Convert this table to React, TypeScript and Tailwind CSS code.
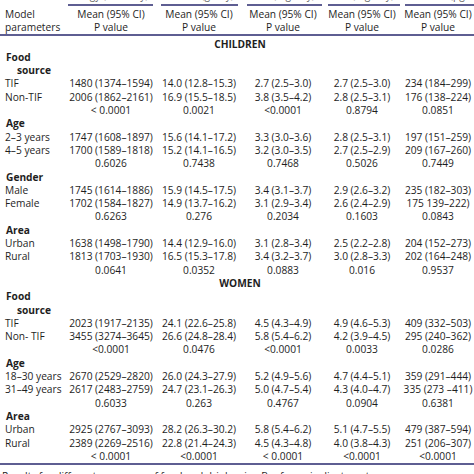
const cols = 'grid grid-cols-[68px_86px_90px_78px_80px_72px]'

type Row =
  | { kind: 'group'; label: string }
  | { kind: 'sub'; label: string }
  | { kind: 'data'; label: string; values: string[] }
  | { kind: 'p'; values: string[] }
  | { kind: 'section'; label: string }

const rows: Row[] = [
  { kind: 'section', label: 'CHILDREN' },
  { kind: 'group', label: 'Food' },
  { kind: 'sub', label: 'source' },
  { kind: 'data', label: 'TIF', values: ['1480 (1374–1594)', '14.0 (12.8–15.3)', '2.7 (2.5–3.0)', '2.7 (2.5–3.0)', '234 (184–299)'] },
  { kind: 'data', label: 'Non-TIF', values: ['2006 (1862–2161)', '16.9 (15.5–18.5)', '3.8 (3.5–4.2)', '2.8 (2.5–3.1)', '176 (138–224)'] },
  { kind: 'p', values: ['< 0.0001', '0.0021', '<0.0001', '0.8794', '0.0851'] },
  { kind: 'group', label: 'Age' },
  { kind: 'data', label: '2–3 years', values: ['1747 (1608–1897)', '15.6 (14.1–17.2)', '3.3 (3.0–3.6)', '2.8 (2.5–3.1)', '197 (151–259)'] },
  { kind: 'data', label: '4–5 years', values: ['1700 (1589–1818)', '15.2 (14.1–16.5)', '3.2 (3.0–3.5)', '2.7 (2.5–2.9)', '209 (167–260)'] },
  { kind: 'p', values: ['0.6026', '0.7438', '0.7468', '0.5026', '0.7449'] },
  { kind: 'group', label: 'Gender' },
  { kind: 'data', label: 'Male', values: ['1745 (1614–1886)', '15.9 (14.5–17.5)', '3.4 (3.1–3.7)', '2.9 (2.6–3.2)', '235 (182–303)'] },
  { kind: 'data', label: 'Female', values: ['1702 (1584–1827)', '14.9 (13.7–16.2)', '3.1 (2.9–3.4)', '2.6 (2.4–2.9)', '175 139–222)'] },
  { kind: 'p', values: ['0.6263', '0.276', '0.2034', '0.1603', '0.0843'] },
  { kind: 'group', label: 'Area' },
  { kind: 'data', label: 'Urban', values: ['1638 (1498–1790)', '14.4 (12.9–16.0)', '3.1 (2.8–3.4)', '2.5 (2.2–2.8)', '204 (152–273)'] },
  { kind: 'data', label: 'Rural', values: ['1813 (1703–1930)', '16.5 (15.3–17.8)', '3.4 (3.2–3.7)', '3.0 (2.8–3.3)', '202 (164–248)'] },
  { kind: 'p', values: ['0.0641', '0.0352', '0.0883', '0.016', '0.9537'] },
  { kind: 'section', label: 'WOMEN' },
  { kind: 'group', label: 'Food' },
  { kind: 'sub', label: 'source' },
  { kind: 'data', label: 'TIF', values: ['2023 (1917–2135)', '24.1 (22.6–25.8)', '4.5 (4.3–4.9)', '4.9 (4.6–5.3)', '409 (332–503)'] },
  { kind: 'data', label: 'Non- TIF', values: ['3455 (3274–3645)', '26.6 (24.8–28.4)', '5.8 (5.4–6.2)', '4.2 (3.9–4.5)', '295 (240–362)'] },
  { kind: 'p', values: ['<0.0001', '0.0476', '<0.0001', '0.0033', '0.0286'] },
  { kind: 'group', label: 'Age' },
  { kind: 'data', label: '18–30 years', values: ['2670 (2529–2820)', '26.0 (24.3–27.9)', '5.2 (4.9–5.6)', '4.7 (4.4–5.1)', '359 (291–444)'] },
  { kind: 'data', label: '31–49 years', values: ['2617 (2483–2759)', '24.7 (23.1–26.3)', '5.0 (4.7–5.4)', '4.3 (4.0–4.7)', '335 (273 –411)'] },
  { kind: 'p', values: ['0.6033', '0.263', '0.4767', '0.0904', '0.6381'] },
  { kind: 'group', label: 'Area' },
  { kind: 'data', label: 'Urban', values: ['2925 (2767–3093)', '28.2 (26.3–30.2)', '5.8 (5.4–6.2)', '5.1 (4.7–5.5)', '479 (387–594)'] },
  { kind: 'data', label: 'Rural', values: ['2389 (2269–2516)', '22.8 (21.4–24.3)', '4.5 (4.3–4.8)', '4.0 (3.8–4.3)', '251 (206–307)'] },
  { kind: 'p', values: ['< 0.0001', '<0.0001', '< 0.0001', '<0.0001', '<0.0001'] },
]

const nutrients = ['Energy (kcal/day), P', 'Protein (g/day)', 'Iron (mg/day)', 'Zinc (mg/day)', 'Vitamin A (µg/day)']
const ruleMargins = ['ml-0 mr-[1px]', 'ml-[7px] mr-[6px]', 'ml-[3px] mr-0', 'ml-[6px] mr-[2px]', 'ml-[3px] mr-0']

function TableRow({ row }: { row: Row }) {
  if (row.kind === 'section') {
    return <div className="h-[13.3px] text-center font-bold pl-[6px]">{row.label}</div>
  }
  if (row.kind === 'group') {
    return <div className="h-[13.3px] pl-[6px] font-bold">{row.label}</div>
  }
  if (row.kind === 'sub') {
    return <div className="h-[13.3px] pl-[17px] font-bold">{row.label}</div>
  }
  return (
    <div className={`${cols} h-[13.3px]`}>
      <div className="pl-[5px] whitespace-nowrap">{row.kind === 'data' ? row.label : ''}</div>
      {row.values.map((v, i) => (
        <div key={i} className="text-center whitespace-nowrap">{v}</div>
      ))}
    </div>
  )
}

export default function App() {
  return (
    <div
      className="w-[474px] h-[474px] overflow-hidden bg-white text-[#1e1e1e] text-[10.2px] leading-[13.3px]"
      style={{ fontFamily: '"Open Sans", "Noto Sans", sans-serif' }}
    >
      {/* column group headings, cut off at the top */}
      <div className="h-[4px] overflow-hidden">
        <div className={`${cols} -mt-[11px] text-[#666]`}>
          <div />
          {nutrients.map((n, i) => (
            <div key={i} className="text-center whitespace-nowrap">{n}</div>
          ))}
        </div>
      </div>
      <div className={cols}>
        <div />
        {ruleMargins.map((m, i) => (
          <div key={i} className={`h-[1.5px] bg-[#5e5e92] ${m}`} />
        ))}
      </div>

      <div className="pt-[2px]">
        <div className={`${cols} h-[13.3px]`}>
          <div className="pl-[5px]">Model</div>
          {nutrients.map((_, i) => (
            <div key={i} className="text-center whitespace-nowrap">Mean (95% CI)</div>
          ))}
        </div>
        <div className={`${cols} h-[13.3px]`}>
          <div className="pl-[5px]">parameters</div>
          {nutrients.map((_, i) => (
            <div key={i} className="text-center whitespace-nowrap">P value</div>
          ))}
        </div>
      </div>
      <div className="h-[1.5px] bg-[#5e5e92]" />

      <div className="pt-[2px]">
        {rows.map((r, i) => (
          <TableRow key={i} row={r} />
        ))}
      </div>
      <div className="h-[1.5px] bg-[#5e5e92]" />

      <div className="pt-[5px] pl-[2px] whitespace-nowrap">
        Results for different measures of food and drink using Bonferroni adjustment.
      </div>
    </div>
  )
}
